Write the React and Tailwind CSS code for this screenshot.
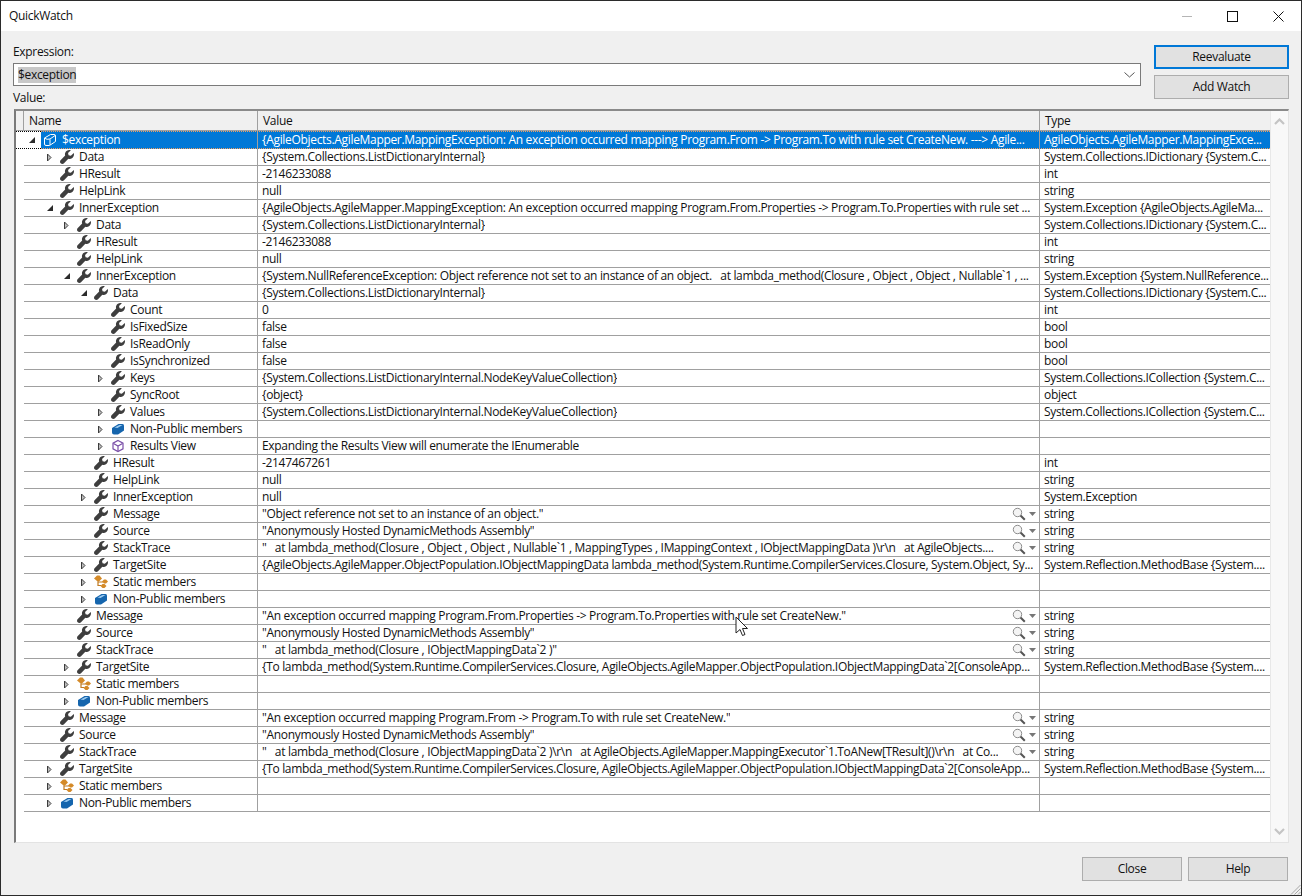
import React from "react";

const font = { fontFamily: '"Open Sans", "Noto Sans", sans-serif' };

const L_DICT = "{System.Collections.ListDictionaryInternal}";
const T_DICT = "System.Collections.IDictionary {System.C...";
const T_SITE = "System.Reflection.MethodBase {System....";
const V_SITE =
  "{To lambda_method(System.Runtime.CompilerServices.Closure, AgileObjects.AgileMapper.ObjectPopulation.IObjectMappingData`2[ConsoleApp...";
const DYN = '"Anonymously Hosted DynamicMethods Assembly"';

// level, arrow (c = collapsed, e = expanded), icon, name, value, type, viz
const rows = [
  [0, "e", "cube", "$exception", "{AgileObjects.AgileMapper.MappingException: An exception occurred mapping Program.From -> Program.To with rule set CreateNew. ---> Agile...", "AgileObjects.AgileMapper.MappingExce..."],
  [1, "c", "w", "Data", L_DICT, T_DICT],
  [1, "", "w", "HResult", "-2146233088", "int"],
  [1, "", "w", "HelpLink", "null", "string"],
  [1, "e", "w", "InnerException", "{AgileObjects.AgileMapper.MappingException: An exception occurred mapping Program.From.Properties -> Program.To.Properties with rule set ...", "System.Exception {AgileObjects.AgileMa..."],
  [2, "c", "w", "Data", L_DICT, T_DICT],
  [2, "", "w", "HResult", "-2146233088", "int"],
  [2, "", "w", "HelpLink", "null", "string"],
  [2, "e", "w", "InnerException", "{System.NullReferenceException: Object reference not set to an instance of an object.   at lambda_method(Closure , Object , Object , Nullable`1 , ...", "System.Exception {System.NullReference..."],
  [3, "e", "w", "Data", L_DICT, T_DICT],
  [4, "", "w", "Count", "0", "int"],
  [4, "", "w", "IsFixedSize", "false", "bool"],
  [4, "", "w", "IsReadOnly", "false", "bool"],
  [4, "", "w", "IsSynchronized", "false", "bool"],
  [4, "c", "w", "Keys", "{System.Collections.ListDictionaryInternal.NodeKeyValueCollection}", "System.Collections.ICollection {System.C..."],
  [4, "", "w", "SyncRoot", "{object}", "object"],
  [4, "c", "w", "Values", "{System.Collections.ListDictionaryInternal.NodeKeyValueCollection}", "System.Collections.ICollection {System.C..."],
  [4, "c", "box", "Non-Public members", "", ""],
  [4, "c", "view", "Results View", "Expanding the Results View will enumerate the IEnumerable", ""],
  [3, "", "w", "HResult", "-2147467261", "int"],
  [3, "", "w", "HelpLink", "null", "string"],
  [3, "c", "w", "InnerException", "null", "System.Exception"],
  [3, "", "w", "Message", '"Object reference not set to an instance of an object."', "string", true],
  [3, "", "w", "Source", DYN, "string", true],
  [3, "", "w", "StackTrace", '"   at lambda_method(Closure , Object , Object , Nullable`1 , MappingTypes , IMappingContext , IObjectMappingData )\\r\\n   at AgileObjects....', "string", true],
  [3, "c", "w", "TargetSite", "{AgileObjects.AgileMapper.ObjectPopulation.IObjectMappingData lambda_method(System.Runtime.CompilerServices.Closure, System.Object, Sy...", T_SITE],
  [3, "c", "static", "Static members", "", ""],
  [3, "c", "box", "Non-Public members", "", ""],
  [2, "", "w", "Message", '"An exception occurred mapping Program.From.Properties -> Program.To.Properties with rule set CreateNew."', "string", true],
  [2, "", "w", "Source", DYN, "string", true],
  [2, "", "w", "StackTrace", '"   at lambda_method(Closure , IObjectMappingData`2 )"', "string", true],
  [2, "c", "w", "TargetSite", V_SITE, T_SITE],
  [2, "c", "static", "Static members", "", ""],
  [2, "c", "box", "Non-Public members", "", ""],
  [1, "", "w", "Message", '"An exception occurred mapping Program.From -> Program.To with rule set CreateNew."', "string", true],
  [1, "", "w", "Source", DYN, "string", true],
  [1, "", "w", "StackTrace", '"   at lambda_method(Closure , IObjectMappingData`2 )\\r\\n   at AgileObjects.AgileMapper.MappingExecutor`1.ToANew[TResult]()\\r\\n   at Co...', "string", true],
  [1, "c", "w", "TargetSite", V_SITE, T_SITE],
  [1, "c", "static", "Static members", "", ""],
  [1, "c", "box", "Non-Public members", "", ""],
];

function Arrow({ kind }) {
  if (kind === "e") {
    return (
      <svg width="8" height="8" viewBox="0 0 8 8" className="shrink-0">
        <path d="M7 1V7H1Z" fill="#2b2b2b" />
      </svg>
    );
  }
  if (kind === "c") {
    return (
      <svg width="8" height="9" viewBox="0 0 8 9" className="shrink-0">
        <path d="M1.5 1L5 4.5L1.5 8Z" fill="#bdbdbd" stroke="#3c3c3c" strokeWidth="1" />
      </svg>
    );
  }
  return <span className="w-[8px] shrink-0" />;
}

function NodeIcon({ kind }) {
  if (kind === "w") {
    return (
      <svg width="14" height="14" viewBox="0 0 16 16" className="shrink-0">
        <path
          d="M15.8 3.4L12.4 6.6L9.8 6L9.2 3.5L12.4 .3C9.8 -.5 7 .6 6 3C5.5 4.3 5.6 5.4 5.9 6.3L.9 11.3C-.3 12.5 -.2 14.2 .8 15.2C1.9 16.2 3.5 16.2 4.6 15.1L9.5 10C10.8 10.5 12.4 10.4 13.7 9.5C15.5 8.2 16.4 5.6 15.8 3.4Z"
          fill="#3e3e3e"
        />
      </svg>
    );
  }
  if (kind === "cube") {
    return (
      <svg width="14" height="14" viewBox="0 0 14 14" fill="none" stroke="#fff" className="shrink-0">
        <path d="M1.5 5L7.5 1.5H11Q12.5 1.5 12.5 3V8.5L6.5 12.5H3Q1.5 12.5 1.5 11Z" />
        <path d="M1.5 5.2Q4 7 7 6L12.3 2.4M7 6.3V12" />
      </svg>
    );
  }
  if (kind === "box") {
    return (
      <svg width="14" height="14" viewBox="0 0 14 14" className="shrink-0">
        <path d="M1 6L7.5 2H11.5Q13.2 2 13 4V8.5L7 12.5H3Q1 12.5 1 10.5Z" fill="#1565ad" />
        <path d="M3.5 5.5L8.5 3H11.5L6.5 6Z" fill="#9ccbf0" />
      </svg>
    );
  }
  if (kind === "view") {
    return (
      <svg width="14" height="14" viewBox="0 0 14 14" fill="none" stroke="#7a4fa8" strokeWidth="1.2" className="shrink-0">
        <path d="M7 1.5L12 4.2V9.8L7 12.5L2 9.8V4.2Z" />
        <path d="M2.5 4.5L7 7L11.5 4.5M7 7V12" />
      </svg>
    );
  }
  return (
    <svg width="14" height="14" viewBox="0 0 14 14" className="shrink-0">
      <path d="M4 5V10.5H7M4 7H9" fill="none" stroke="#c07a20" strokeWidth="1.2" />
      <path d="M0 3.5L3 .5H5.5L8 3.5L5.5 6H3Z" fill="#d48a28" />
      <path d="M8 6.5L10 4.5H12L14 6.5L12 8.5H10Z" fill="#d48a28" />
      <path d="M6.5 11L8.5 9H10.5L12.5 11L10.5 13H8.5Z" fill="#d48a28" />
    </svg>
  );
}

function Viz() {
  return (
    <span className="ml-auto flex w-[24px] shrink-0 items-center gap-[3px]">
      <svg width="14" height="14" viewBox="0 0 14 14" fill="none" className="shrink-0">
        <circle cx="5.5" cy="5.5" r="4.2" fill="#f4f4f4" stroke="#8c8c8c" />
        <path d="M8.5 8.5L12.8 12.8" stroke="#555" strokeWidth="2" />
      </svg>
      <svg width="7" height="4" viewBox="0 0 7 4" className="shrink-0">
        <path d="M0 0H7L3.5 4Z" fill="#777" />
      </svg>
    </span>
  );
}

function Row({ row, selected }) {
  const [level, arrow, icon, name, value, type, viz] = row;
  if (selected) {
    return (
      <div className="flex h-[18px] text-[12px] leading-[16px]">
        <div className="flex w-[25px] shrink-0 items-center justify-end border-y border-dotted border-black pr-[5px]">
          <Arrow kind={arrow} />
        </div>
        <div className="flex w-[1229px] shrink-0 border-y border-dotted border-[#f0a060] bg-[#0078d7] text-white">
          <div className="flex w-[216px] shrink-0 items-center gap-[5px] pl-[2px]">
            <NodeIcon kind={icon} />
            <span>{name}</span>
          </div>
          <div className="w-[782px] shrink-0 overflow-hidden border-l border-[#a0a0a0] pl-[4px] whitespace-pre">{value}</div>
          <div className="w-[231px] shrink-0 overflow-hidden border-l border-[#a0a0a0] pl-[4px] whitespace-pre">{type}</div>
        </div>
      </div>
    );
  }
  return (
    <div className="flex h-[17px] text-[12px] leading-[16px] text-[#111]">
      <div className="w-[8px] shrink-0" />
      <div className="flex w-[233px] shrink-0 items-center border-b border-[#a0a0a0]">
        <div className="flex items-center" style={{ paddingLeft: 5 + 17 * level }}>
          <Arrow kind={arrow} />
          <span className="w-[6px]" />
          <NodeIcon kind={icon} />
          <span className="ml-[5px]">{name}</span>
        </div>
      </div>
      <div className="flex w-[782px] shrink-0 items-center overflow-hidden border-b border-l border-[#a0a0a0] pr-[3px] pl-[4px]">
        <span className="overflow-hidden whitespace-pre">{value}</span>
        {viz ? <Viz /> : null}
      </div>
      <div className="w-[231px] shrink-0 overflow-hidden border-b border-l border-[#a0a0a0] pl-[4px] whitespace-pre">{type}</div>
    </div>
  );
}

function Btn({ children, primary, className }) {
  return (
    <button
      className={
        "flex h-[24px] items-center justify-center bg-[#e1e1e1] text-[12px] text-[#111] " +
        (primary ? "border-2 border-[#0078d7] " : "border border-[#adadad] ") +
        (className || "")
      }
    >
      {children}
    </button>
  );
}

export default function App() {
  return (
    <div
      className="relative flex h-[896px] w-[1302px] flex-col overflow-hidden border border-[#2b2b2b] bg-[#f0f0f0] tracking-[-0.32px]"
      style={font}
    >
      <div className="flex h-[30px] shrink-0 items-center bg-white pl-[8px] text-[12px] text-[#111]">
        <span>QuickWatch</span>
        <div className="ml-auto flex items-center">
          <span className="mr-[35px] h-px w-[10px] bg-[#b5b5b5]" />
          <span className="mr-[35px] h-[11px] w-[11px] border border-[#111]" />
          <svg width="11" height="11" viewBox="0 0 11 11" className="mr-[17px]">
            <path d="M.5 .5L10.5 10.5M10.5 .5L.5 10.5" stroke="#111" fill="none" />
          </svg>
        </div>
      </div>

      <div className="flex h-[78px] shrink-0 pl-[12px]">
        <div className="w-[1128px] pt-[13px] text-[12px] leading-[16px] text-[#111]">
          <div>Expression:</div>
          <div className="mt-[3px] flex h-[23px] items-center border border-[#7a7a7a] bg-white pr-[5px] pl-[4px]">
            <span className="bg-[#c8c8c8]">$exception</span>
            <svg width="11" height="6" viewBox="0 0 11 6" className="ml-auto">
              <path d="M.5 .5L5.5 5L10.5 .5" fill="none" stroke="#555" />
            </svg>
          </div>
          <div className="mt-[4px]">Value:</div>
        </div>
        <div className="ml-[13px] flex w-[135px] flex-col gap-[6px] pt-[14px]">
          <Btn primary>Reevaluate</Btn>
          <Btn>Add Watch</Btn>
        </div>
      </div>

      <div className="ml-[13px] flex h-[734px] w-[1275px] shrink-0 border-t-2 border-r border-b border-l-2 border-t-[#8a8a8a] border-r-[#e3e3e3] border-b-[#e3e3e3] border-l-[#7a7a7a] bg-white">
        <div className="w-[1254px] shrink-0">
          <div className="flex h-[20px] border-b border-[#a0a0a0] bg-[#f0f0f0] text-[12px] leading-[19px] text-[#111]">
            <div className="w-[8px] shrink-0 border-r border-[#a0a0a0]" />
            <div className="w-[233px] shrink-0 pl-[5px]">Name</div>
            <div className="w-[782px] shrink-0 border-l border-[#a0a0a0] pl-[5px]">Value</div>
            <div className="flex-1 border-l border-[#a0a0a0] pl-[5px]">Type</div>
          </div>
          {rows.map((r, i) => (
            <Row key={i} row={r} selected={i === 0} />
          ))}
        </div>
        <div className="flex flex-1 flex-col items-center justify-between border-l border-[#e8e8e8] bg-[#f8f8f8] py-[7px]">
          <svg width="11" height="7" viewBox="0 0 11 7">
            <path d="M1 6L5.5 1.5L10 6" fill="none" stroke="#c4c4c4" strokeWidth="2.2" />
          </svg>
          <svg width="11" height="7" viewBox="0 0 11 7">
            <path d="M1 1L5.5 5.5L10 1" fill="none" stroke="#c4c4c4" strokeWidth="2.2" />
          </svg>
        </div>
      </div>

      <div className="mt-[14px] flex justify-end gap-[6px] pr-[13px]">
        <Btn className="w-[100px]">Close</Btn>
        <Btn className="w-[100px]">Help</Btn>
      </div>

      {/* mouse pointer over the grid */}
      <svg width="14" height="21" viewBox="0 0 14 21" className="absolute top-[615px] left-[734px]">
        <path d="M1 1V17L5 13.5L7.5 19.5L10 18.5L7.5 12.5H12.5Z" fill="#fff" stroke="#222" />
      </svg>

      {/* resize grip */}
      <svg width="11" height="11" viewBox="0 0 11 11" className="absolute right-0 bottom-0">
        <path d="M10.5 1L1 10.5M10.5 4.5L4.5 10.5M10.5 8L8 10.5" stroke="#a8a8a8" fill="none" />
      </svg>
    </div>
  );
}
